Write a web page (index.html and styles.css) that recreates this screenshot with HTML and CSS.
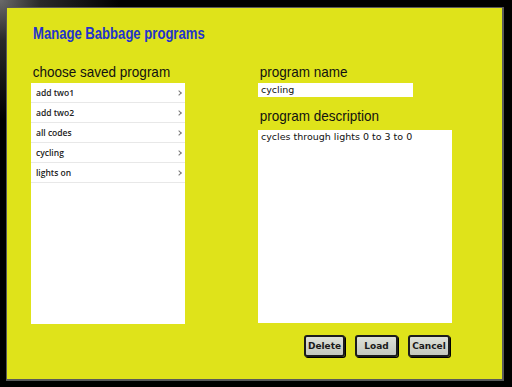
FILE: index.html
```html
<!DOCTYPE html>
<html lang="en">
<head>
  <meta charset="UTF-8">
  <title>Manage Babbage programs</title>
  <link rel="stylesheet" href="styles.css">
</head>
<body>
  <div class="dialog">
    <h1 class="title">Manage Babbage programs</h1>
    <div class="columns">
      <div class="col-left">
        <div class="label">choose saved program</div>
        <ul class="program-list">
          <li>add two1<span class="chev"></span></li>
          <li>add two2<span class="chev"></span></li>
          <li>all codes<span class="chev"></span></li>
          <li>cycling<span class="chev"></span></li>
          <li>lights on<span class="chev"></span></li>
        </ul>
      </div>
      <div class="col-right">
        <div class="label">program name</div>
        <div class="name-field">cycling</div>
        <div class="label label-desc">program description</div>
        <div class="desc-field">cycles through lights 0 to 3 to 0</div>
        <div class="buttons">
          <button class="btn btn-delete">Delete</button>
          <button class="btn btn-load">Load</button>
          <button class="btn btn-cancel">Cancel</button>
        </div>
      </div>
    </div>
  </div>
</body>
</html>
```

FILE: styles.css
```css
html, body {
  margin: 0;
  height: 100%;
}
body {
  background: radial-gradient(circle at 0 0, #6a6a6a 0, #2a2a2a 40px, #000 120px);
  background-color: #000;
  padding: 7px 8px 6px 6px;
  box-sizing: border-box;
  font-family: 'Liberation Sans', Arial, sans-serif;
}
.dialog {
  width: 498px;
  height: 374px;
  box-sizing: border-box;
  border: 2px solid #5a5a5a;
  border-top-width: 1px;
  border-left-width: 1px;
  background-color: #dfe31a;
  padding: 16px 0 0 24px;
}
.title {
  margin: 0 0 0 2px;
  font-size: 17px;
  line-height: 20px;
  font-weight: bold;
  color: #2233cc;
  transform: scaleX(0.77);
  transform-origin: 0 0;
  white-space: nowrap;
}
.columns {
  display: grid;
  grid-template-columns: 154px 194px;
  column-gap: 73px;
  margin-top: 19px;
  align-items: start;
}
.label {
  font-size: 15px;
  line-height: 18px;
  color: #111;
  padding-left: 2px;
  margin-bottom: 2px;
  transform: scaleX(0.9);
  transform-origin: 0 0;
  white-space: nowrap;
}
.program-list {
  list-style: none;
  margin: 0;
  padding: 0;
  background: #fff;
  height: 241px;
}
.program-list li {
  display: flex;
  align-items: center;
  justify-content: space-between;
  height: 19px;
  border-bottom: 1px solid #e8e8e8;
  padding: 0 3px 0 5px;
  font-family: 'Open Sans', sans-serif;
  font-size: 8.5px;
  font-weight: 600;
  color: #222;
}
.chev {
  width: 3px;
  height: 3px;
  border-top: 1.3px solid #777;
  border-right: 1.3px solid #777;
  transform: rotate(45deg);
  margin-right: 1px;
}
.name-field {
  background: #fff;
  width: 155px;
  height: 14px;
  box-sizing: border-box;
  padding: 0 3px;
  font-family: 'DejaVu Sans', sans-serif;
  font-size: 9.5px;
  line-height: 14px;
  color: #111;
}
.label-desc {
  margin-top: 10px;
  margin-bottom: 5px;
}
.desc-field {
  background: #fff;
  height: 193px;
  box-sizing: border-box;
  padding: 1px 3px;
  font-family: 'DejaVu Sans', sans-serif;
  font-size: 9.5px;
  line-height: 12px;
  color: #111;
}
.buttons {
  display: flex;
  gap: 10px;
  margin-top: 12px;
  padding-left: 46px;
}
.btn {
  height: 22px;
  box-sizing: border-box;
  border: 2px solid #1c1c1c;
  border-radius: 3px;
  background: linear-gradient(#dde0d8, #c4c8be);
  box-shadow: 1px 1px 0 #000;
  font-family: 'DejaVu Sans', sans-serif;
  font-size: 9px;
  font-weight: bold;
  color: #1a1a1a;
  padding: 0;
}
.btn-delete { width: 41px; }
.btn-load { width: 43px; }
.btn-cancel { width: 42px; }
```
